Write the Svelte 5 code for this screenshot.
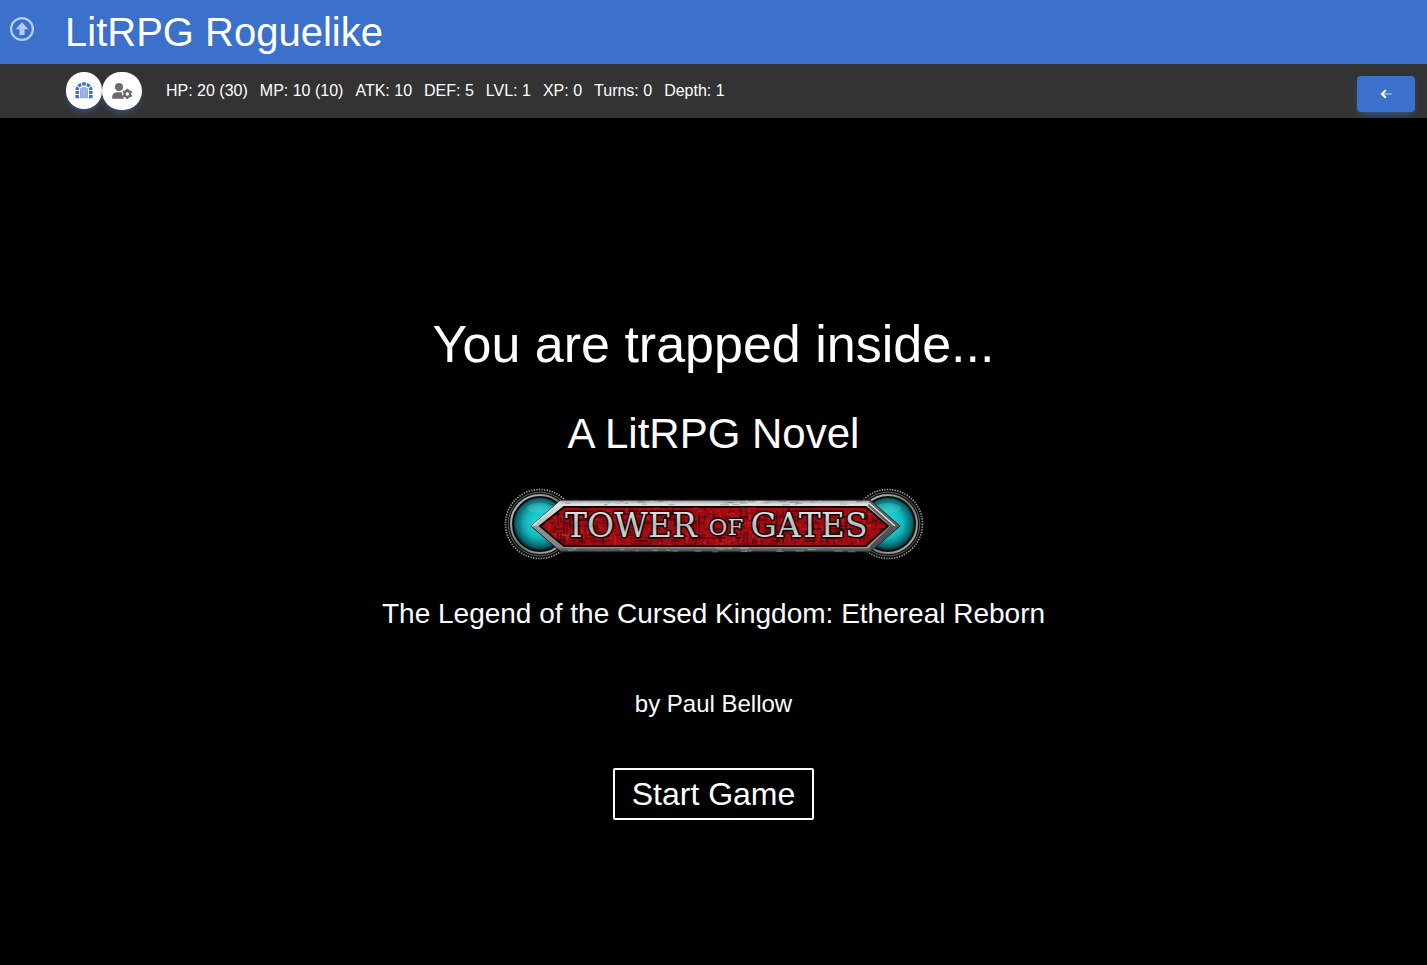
<script>
  let started = $state(false);

  const stats = [
    ['HP', '20 (30)'],
    ['MP', '10 (10)'],
    ['ATK', '10'],
    ['DEF', '5'],
    ['LVL', '1'],
    ['XP', '0'],
    ['Turns', '0'],
    ['Depth', '1'],
  ];

  // Small seeded generator so the brickwork looks the same on every load
  let seed = 4711;
  function rnd() {
    seed = (seed * 16807) % 2147483647;
    return seed / 2147483647;
  }

  // Maze-like grooves behind the logo lettering
  const grooves = Array.from({ length: 620 }, () => {
    const x = 36 + Math.round(rnd() * 116) * 3;
    const y = 20 + Math.round(rnd() * 12) * 3;
    const len = 3 + Math.round(rnd() * 3) * 3;
    return {
      d: rnd() < 0.5 ? `M${x} ${y}h${len}` : `M${x} ${y}v${len}`,
      color: rnd() < 0.72 ? '#240306' : '#e02a30',
    };
  });

  // Scratches on the metal rails
  const scratches = Array.from({ length: 90 }, () => ({
    x: 60 + rnd() * 300,
    y: (rnd() < 0.5 ? 12.5 : 59.5) + rnd() * 4,
    w: 2 + rnd() * 7,
    color: rnd() < 0.5 ? '#f2f4f2' : '#4b504e',
  }));

  const orbs = [36, 384];
  const gearTeeth = [0, 60, 120, 180, 240, 300];
</script>

<div class="app">
  <header class="title-bar">
    <a class="top-link" href="#top" aria-label="Back to top">
      <svg width="24" height="24" viewBox="0 0 24 24">
        <circle cx="12" cy="12" r="10.9" fill="none" stroke="currentColor" stroke-width="2.2" />
        <path d="M12 5.2 18.3 12.2H14.5V18H9.5V12.2H5.7Z" fill="currentColor" />
      </svg>
    </a>
    <h1>LitRPG Roguelike</h1>
  </header>

  <nav class="toolbar">
    <div class="actions">
      <button class="round" aria-label="Dungeon">
        <svg width="18" height="17" viewBox="0 0 18 17" fill="#3b71ca">
          <path d="M6.7 .6Q9 0 11.3 .6L10.5 3.8Q9 3.4 7.5 3.8Z" />
          <path d="M5.7 .9 6.7 4.1Q5.6 4.6 4.9 5.4L2.2 3.4Q3.6 1.7 5.7 .9Z" />
          <path d="M12.3 .9 11.3 4.1Q12.4 4.6 13.1 5.4L15.8 3.4Q14.4 1.7 12.3 .9Z" />
          <path d="M1.6 4.3 4.3 6.3Q3.9 7 3.8 8H.4Q.5 5.9 1.6 4.3Z" />
          <path d="M16.4 4.3 13.7 6.3Q14.1 7 14.2 8H17.6Q17.5 5.9 16.4 4.3Z" />
          <path d="M.4 9H4V12H.4ZM.4 13H4V16.3H.4ZM14 9H17.6V12H14ZM14 13H17.6V16.3H14Z" />
          <path d="M5.4 6.6 6.5 5.6V16.3H5.4ZM7.4 5H8.5V16.3H7.4ZM9.5 5H10.6V16.3H9.5ZM11.5 5.6 12.6 6.6V16.3H11.5Z" />
        </svg>
      </button>
      <button class="round wide" aria-label="Character settings">
        <svg width="20" height="16" viewBox="0 0 20 16" fill="#6b6b6b">
          <circle cx="7" cy="4" r="4" />
          <path d="M5.3 9.3H8.7Q9.4 9.3 9.9 9.5 9.4 12.6 11.9 15.2 12 15.8 11 15.8H.9Q0 15.8 0 14.9 0 9.3 5.3 9.3Z" />
          {#each gearTeeth as angle}
            <rect x="14.2" y="5.8" width="2.2" height="3" rx="0.5" transform="rotate({angle} 15.3 10.9)" />
          {/each}
          <circle cx="15.3" cy="10.9" r="2.9" fill="none" stroke="#6b6b6b" stroke-width="2.3" />
        </svg>
      </button>
    </div>

    <ul class="stats">
      {#each stats as [label, value]}
        <li>{label}: {value}</li>
      {/each}
    </ul>

    <button class="back" aria-label="Go back">
      <svg width="12" height="10" viewBox="0 0 12 10" fill="none" stroke="#fff">
        <path d="M5.8 1.2 2 5 5.8 8.8" stroke-width="2.2" />
        <path d="M3 5H11.5" stroke-width="1.4" opacity="0.55" />
      </svg>
    </button>
  </nav>

  <main class="intro">
    <h2 class="lead">You are trapped inside...</h2>
    <p class="genre">A LitRPG Novel</p>

    <div class="logo">
      <svg width="420" height="72" viewBox="0 0 420 72" role="img" aria-label="Tower of Gates">
        <defs>
          <radialGradient id="orb" cx="50%" cy="48%" r="54%">
            <stop offset="0%" stop-color="#22e6e6" />
            <stop offset="55%" stop-color="#12b3b8" />
            <stop offset="85%" stop-color="#08646c" />
            <stop offset="100%" stop-color="#021c22" />
          </radialGradient>
          <linearGradient id="rim" x1="0" y1="0" x2="1" y2="1">
            <stop offset="0%" stop-color="#cfd2d1" />
            <stop offset="50%" stop-color="#6c706f" />
            <stop offset="100%" stop-color="#b9bcbb" />
          </linearGradient>
          <linearGradient id="steel" x1="0" y1="0" x2="0" y2="1">
            <stop offset="0%" stop-color="#8c908f" />
            <stop offset="8%" stop-color="#dfe2df" />
            <stop offset="50%" stop-color="#b6bab8" />
            <stop offset="90%" stop-color="#9b9f9d" />
            <stop offset="100%" stop-color="#424644" />
          </linearGradient>
          <linearGradient id="letters" x1="0" y1="0" x2="0" y2="1">
            <stop offset="0%" stop-color="#f4f5f3" />
            <stop offset="50%" stop-color="#b4b8b6" />
            <stop offset="100%" stop-color="#e8ebe8" />
          </linearGradient>
          <clipPath id="field">
            <path d="M36 38 60 19H362L384 38 362 58H60Z" />
          </clipPath>
        </defs>

        {#each orbs as cx}
          <circle {cx} cy="36" r="35.5" fill="#0b0c0c" />
          <circle {cx} cy="36" r="34.5" fill="none" stroke="#9a9d9c" stroke-width="1.6" stroke-dasharray="1.3 1.3" />
          <circle {cx} cy="36" r="31.8" fill="none" stroke="#6f7372" stroke-width="0.8" />
          <circle {cx} cy="36" r="29" fill="none" stroke="url(#rim)" stroke-width="2" />
          <circle {cx} cy="36" r="26" fill="url(#orb)" />
          <ellipse {cx} cy="20" rx="13" ry="5" fill="#8ff5f2" opacity="0.2" />
        {/each}

        <path d="M27 38 57 12H366L396 38 366 64H57Z" fill="url(#steel)" stroke="#131515" />
        <path d="M27 38 57 64H366L396 38 388 38 364 60H60L35 38Z" fill="#2d3130" opacity="0.25" />
        <path d="M366 12 396 38 366 64V58L386 38 364 18Z" fill="#3a3e3d" opacity="0.75" />
        {#each scratches as s}
          <rect x={s.x} y={s.y} width={s.w} height="0.8" fill={s.color} opacity="0.45" />
        {/each}
        <path d="M36 38 60 19H362L384 38 362 58H60Z" fill="#a00c12" stroke="#110203" stroke-width="2" />
        <g clip-path="url(#field)" fill="none">
          {#each grooves as g}
            <path d={g.d} stroke={g.color} opacity="0.65" />
          {/each}
        </g>
        <path d="M28 38 57 13M391 38 365 15" stroke="#e8ebe8" stroke-width="1.2" />

        <g class="lettering" fill="url(#letters)" stroke="#170405" stroke-width="3" paint-order="stroke" stroke-linejoin="round">
          <text x="127" y="49" font-size="33">TOWER</text>
          <text x="222" y="47" font-size="23">OF</text>
          <text x="305" y="49" font-size="33">GATES</text>
        </g>
      </svg>
    </div>

    <p class="series">The Legend of the Cursed Kingdom: Ethereal Reborn</p>
    <p class="author">by Paul Bellow</p>
    <div>
      <button class="start" aria-pressed={started} onclick={() => (started = true)}>Start Game</button>
    </div>
  </main>
</div>

<style>
  :global(body) {
    background: #000;
  }

  .app {
    min-height: 100vh;
    background: #000;
    color: #fff;
    font-family: "Liberation Sans", Arial, sans-serif;
    font-size: 16px;
  }

  h1, h2, p, ul {
    margin: 0;
    padding: 0;
    font-weight: 400;
  }

  svg {
    display: block;
  }

  button {
    display: flex;
    align-items: center;
    justify-content: center;
    border: 0;
    font: inherit;
    color: inherit;
    cursor: pointer;
  }

  .title-bar {
    display: flex;
    align-items: flex-start;
    gap: 31px;
    padding: 0 10px;
    background: #3b71ca;
  }

  .top-link {
    padding-top: 17px;
    color: #b6cdf5;
  }

  h1 {
    font-size: 40px;
    line-height: 64px;
  }

  .toolbar {
    display: flex;
    align-items: flex-start;
    padding: 8px 12px 8px 66px;
    background: #333;
  }

  .actions {
    display: flex;
    align-items: flex-start;
  }

  .round {
    width: 36px;
    height: 37px;
    padding: 0;
    border-radius: 20px;
    background: #fff;
    box-shadow: 0 4px 9px -4px #3b71ca;
  }

  .round.wide {
    width: 40px;
    height: 38px;
  }

  .stats {
    display: flex;
    flex: 1;
    flex-wrap: wrap;
    gap: 0 12px;
    padding-left: 24px;
    line-height: 38px;
    list-style: none;
  }

  .back {
    width: 58px;
    height: 36px;
    margin: 4px 0 -2px;
    border-radius: 4px;
    background: #3b71ca;
    box-shadow: 0 4px 9px -4px #3b71ca;
  }

  .intro {
    display: grid;
    grid-auto-rows: 90px;
    place-items: center;
    padding: 181px 16px 32px;
    text-align: center;
  }

  .lead {
    font-size: 52px;
  }

  .genre {
    font-size: 42px;
  }

  .series {
    font-size: 28px;
  }

  .author {
    font-size: 24px;
  }

  .lettering {
    font-family: "DejaVu Serif", serif;
    text-anchor: middle;
  }

  .start {
    padding: 0 17px;
    border: 2px solid #fff;
    border-radius: 2px;
    background: #000;
    font-size: 32px;
    line-height: 48px;
  }
</style>
